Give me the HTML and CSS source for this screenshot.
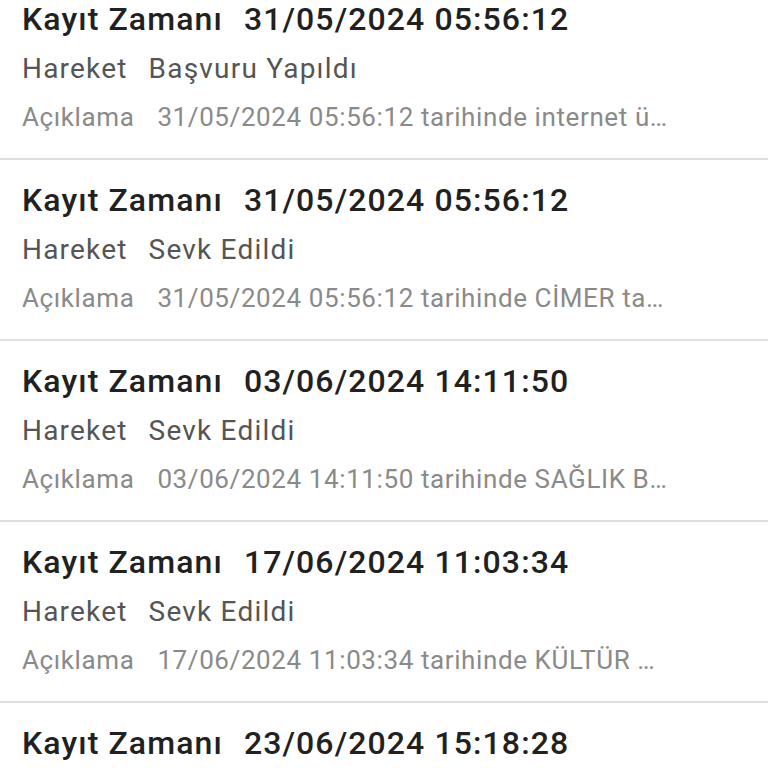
FILE: index.html
```html
<!DOCTYPE html>
<html lang="tr">
<head>
    <meta charset="UTF-8">
    <meta name="viewport" content="width=device-width, initial-scale=1.0">
    <title>Başvuru Hareketleri</title>
    <link rel="stylesheet" href="styles.css">
</head>
<body>
    <div class="history-list">
        <div class="history-item">
            <div class="row title-row"><span class="label">Kayıt Zamanı</span><span class="value">31/05/2024 05:56:12</span></div>
            <div class="row action-row"><span class="label">Hareket</span><span class="value">Başvuru Yapıldı</span></div>
            <div class="row desc-row"><span class="label">Açıklama</span><span class="value">31/05/2024 05:56:12 tarihinde internet üzerinden başvuru yapıldı.</span></div>
        </div>
        <div class="history-item">
            <div class="row title-row"><span class="label">Kayıt Zamanı</span><span class="value">31/05/2024 05:56:12</span></div>
            <div class="row action-row"><span class="label">Hareket</span><span class="value">Sevk Edildi</span></div>
            <div class="row desc-row"><span class="label">Açıklama</span><span class="value">31/05/2024 05:56:12 tarihinde CİMER tarafından sevk edildi.</span></div>
        </div>
        <div class="history-item">
            <div class="row title-row"><span class="label">Kayıt Zamanı</span><span class="value">03/06/2024 14:11:50</span></div>
            <div class="row action-row"><span class="label">Hareket</span><span class="value">Sevk Edildi</span></div>
            <div class="row desc-row"><span class="label">Açıklama</span><span class="value">03/06/2024 14:11:50 tarihinde SAĞLIK BAKANLIĞI tarafından sevk edildi.</span></div>
        </div>
        <div class="history-item">
            <div class="row title-row"><span class="label">Kayıt Zamanı</span><span class="value">17/06/2024 11:03:34</span></div>
            <div class="row action-row"><span class="label">Hareket</span><span class="value">Sevk Edildi</span></div>
            <div class="row desc-row"><span class="label">Açıklama</span><span class="value">17/06/2024 11:03:34 tarihinde KÜLTÜR VE TURİZM BAKANLIĞI tarafından sevk edildi.</span></div>
        </div>
        <div class="history-item">
            <div class="row title-row"><span class="label">Kayıt Zamanı</span><span class="value">23/06/2024 15:18:28</span></div>
            <div class="row action-row"><span class="label">Hareket</span><span class="value">Sevk Edildi</span></div>
            <div class="row desc-row"><span class="label">Açıklama</span><span class="value">23/06/2024 15:18:28 tarihinde sevk edildi.</span></div>
        </div>
    </div>
</body>
</html>
```

FILE: styles.css
```css
body {
    margin: 0;
    background: #fff;
    font-family: Roboto, "Noto Sans", sans-serif;
    overflow: hidden;
}
.history-list {
    margin-top: -21px;
}
.history-item {
    padding: 16px 100px 16px 22px;
    border-bottom: 2px solid #dedede;
}
.row {
    display: flex;
    gap: 21px;
    height: 49px;
    line-height: 49px;
    white-space: nowrap;
}
.title-row {
    font-size: 32px;
    font-weight: 500;
    letter-spacing: 1.1px;
    color: #212121;
}
.action-row {
    font-size: 28px;
    letter-spacing: 1.2px;
    color: #555;
}
.desc-row {
    gap: 23px;
    font-size: 26px;
    letter-spacing: 0.6px;
    color: #8a8a8a;
}
.value {
    overflow: hidden;
    text-overflow: ellipsis;
    min-width: 0;
}
```
